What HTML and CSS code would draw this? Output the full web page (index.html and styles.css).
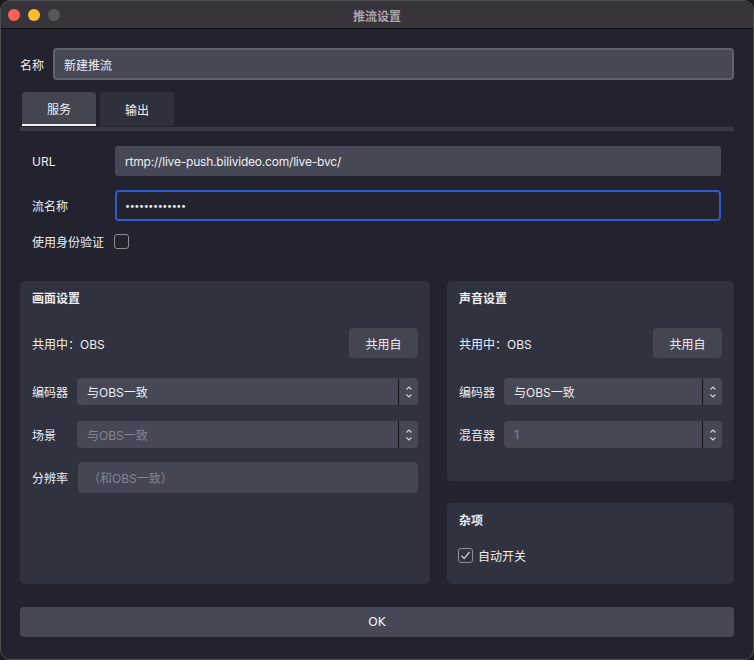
FILE: index.html
```html
<!DOCTYPE html>
<html lang="zh-CN">
<head>
    <meta charset="UTF-8">
    <meta name="viewport" content="width=device-width, initial-scale=1.0">
    <title>推流设置</title>
    <link rel="stylesheet" href="styles.css">
</head>
<body>
    <div class="window">
        <!-- Title bar -->
        <div class="titlebar">
            <div class="lights">
                <span class="light red"></span>
                <span class="light yellow"></span>
                <span class="light gray"></span>
            </div>
            <div class="title">推流设置</div>
            <div></div>
        </div>

        <div class="content">
            <div class="name-row">
                <span class="name-label">名称</span>
                <div class="name-input">新建推流</div>
            </div>

            <div class="tabs">
                <div class="tab active">服务</div>
                <div class="tab">输出</div>
            </div>
            <div class="tab-bar"></div>

            <!-- Service tab -->
            <div class="service">
                <div class="field-row">
                    <span class="field-label">URL</span>
                    <div class="text-input url">rtmp://live-push.bilivideo.com/live-bvc/</div>
                </div>
                <div class="field-row">
                    <span class="field-label">流名称</span>
                    <div class="text-input focused"><span class="dots">•••••••••••••</span></div>
                </div>
                <div class="check-row">
                    <span class="field-label auth-label">使用身份验证</span>
                    <span class="checkbox"></span>
                </div>
            </div>

            <div class="groups">
                <div class="group">
                    <div class="group-title">画面设置</div>
                    <div class="share-row">
                        <span>共用中：OBS</span>
                        <div class="btn">共用自</div>
                    </div>
                    <div class="combo-row first">
                        <span class="combo-label">编码器</span>
                        <div class="combo">
                            <span class="combo-text">与OBS一致</span>
                            <span class="spinner">
                                <svg width="8" height="14" viewBox="0 0 8 14"><polyline points="1.5,4.5 4,2 6.5,4.5" /><polyline points="1.5,9.5 4,12 6.5,9.5" /></svg>
                            </span>
                        </div>
                    </div>
                    <div class="combo-row">
                        <span class="combo-label">场景</span>
                        <div class="combo">
                            <span class="combo-text muted">与OBS一致</span>
                            <span class="spinner">
                                <svg width="8" height="14" viewBox="0 0 8 14"><polyline points="1.5,4.5 4,2 6.5,4.5" /><polyline points="1.5,9.5 4,12 6.5,9.5" /></svg>
                            </span>
                        </div>
                    </div>
                    <div class="combo-row last">
                        <span class="combo-label">分辨率</span>
                        <div class="plain-input">（和OBS一致）</div>
                    </div>
                </div>

                <div class="side">
                    <div class="group audio">
                        <div class="group-title">声音设置</div>
                        <div class="share-row">
                            <span>共用中：OBS</span>
                            <div class="btn">共用自</div>
                        </div>
                        <div class="combo-row first">
                            <span class="combo-label">编码器</span>
                            <div class="combo">
                                <span class="combo-text">与OBS一致</span>
                                <span class="spinner">
                                    <svg width="8" height="14" viewBox="0 0 8 14"><polyline points="1.5,4.5 4,2 6.5,4.5" /><polyline points="1.5,9.5 4,12 6.5,9.5" /></svg>
                                </span>
                            </div>
                        </div>
                        <div class="combo-row">
                            <span class="combo-label">混音器</span>
                            <div class="combo">
                                <span class="combo-text muted">1</span>
                                <span class="spinner">
                                    <svg width="8" height="14" viewBox="0 0 8 14"><polyline points="1.5,4.5 4,2 6.5,4.5" /><polyline points="1.5,9.5 4,12 6.5,9.5" /></svg>
                                </span>
                            </div>
                        </div>
                    </div>

                    <div class="group misc">
                        <div class="group-title">杂项</div>
                        <div class="auto-row">
                            <span class="checkbox checked">
                                <svg width="13" height="13" viewBox="0 0 13 13"><polyline points="2.5,6.8 5.2,9.5 10.5,3" /></svg>
                            </span>
                            <span>自动开关</span>
                        </div>
                    </div>
                </div>
            </div>

            <button class="ok-btn">OK</button>
        </div>
    </div>
</body>
</html>
```

FILE: styles.css
```css
* {
    margin: 0;
    padding: 0;
    box-sizing: border-box;
}

:root {
    --bg: #22232e;
    --group-bg: #30333f;
    --input-bg: #464955;
    --text: #eeeef2;
    --muted: #82858e;
    --focus: #2f5bd0;
}

html, body {
    background: #1c1c1f;
}

body {
    font-family: "Inter", "Noto Sans CJK SC", sans-serif;
    font-size: 12px;
    color: var(--text);
}

.window {
    width: 754px;
    height: 660px;
    background: var(--bg);
    border: 1px solid #4d4d53;
    border-radius: 10px;
    overflow: hidden;
    display: flex;
    flex-direction: column;
}

/* title bar */
.titlebar {
    height: 28px;
    background: #38343c;
    border-bottom: 1px solid #0c0c0e;
    display: grid;
    grid-template-columns: 1fr auto 1fr;
    align-items: center;
}

.lights {
    display: flex;
    gap: 8px;
    padding-left: 7px;
    padding-top: 1px;
}

.light {
    width: 12px;
    height: 12px;
    border-radius: 50%;
}

.light.red { background: #fe5f57; }
.light.yellow { background: #febc2e; }
.light.gray { background: #57565b; }

.title {
    font-size: 12px;
    font-weight: 700;
    color: #aaa7ad;
    padding-top: 1px;
}

.content {
    flex: 1;
    display: flex;
    flex-direction: column;
    padding: 19px 19px 0;
}

/* name */
.name-row {
    display: flex;
    align-items: center;
    height: 32px;
}

.name-label {
    width: 33px;
}

.name-input {
    flex: 1;
    height: 32px;
    background: var(--input-bg);
    border: 2px solid #60636d;
    border-radius: 4px;
    padding-left: 9px;
    display: flex;
    align-items: center;
}

/* tabs */
.tabs {
    display: flex;
    gap: 4px;
    margin-top: 12px;
    padding-left: 2px;
}

.tab {
    width: 74px;
    height: 34px;
    background: #2e313c;
    border-radius: 4px 4px 0 0;
    display: flex;
    align-items: center;
    justify-content: center;
}

.tab.active {
    background: #434651;
    border-bottom: 2px solid #f2f2f2;
    padding-top: 1px;
}

.tab-bar {
    height: 4px;
    margin-top: 1px;
    background: #363945;
}

/* service fields */
.service {
    padding: 15px 13px 0 12px;
    display: flex;
    flex-direction: column;
}

.field-row {
    display: flex;
    align-items: center;
    margin-bottom: 14px;
}

.field-label {
    width: 83px;
}

.text-input {
    flex: 1;
    height: 30px;
    background: var(--input-bg);
    border-radius: 3px;
    padding-left: 10px;
    display: flex;
    align-items: center;
}

.text-input.url {
    letter-spacing: -0.2px;
}

.text-input.focused {
    height: 31px;
    background: var(--bg);
    border: 2px solid var(--focus);
    border-radius: 4px;
    padding-left: 8px;
}

.dots {
    font-size: 9px;
    letter-spacing: -0.4px;
}

.check-row {
    display: flex;
    align-items: center;
    height: 15px;
    margin-top: -1px;
}

.auth-label {
    width: 82px;
}

.checkbox {
    width: 15px;
    height: 15px;
    border: 1.5px solid #8e8f95;
    border-radius: 3px;
    display: flex;
    align-items: center;
    justify-content: center;
}

.checkbox svg polyline {
    fill: none;
    stroke: #c9c9cd;
    stroke-width: 1.3;
}

/* groups */
.groups {
    display: flex;
    gap: 17px;
    margin-top: 32px;
}

.group {
    width: 410px;
    background: var(--group-bg);
    border-radius: 5px;
    padding: 9px 12px 0;
    display: flex;
    flex-direction: column;
}

.side {
    flex: 1;
    display: flex;
    flex-direction: column;
    gap: 22px;
}

.side .group {
    width: auto;
}

.group.audio {
    padding-bottom: 33px;
}

.group.misc {
    padding-bottom: 21px;
}

.group-title {
    font-weight: 700;
    line-height: 17px;
}

.share-row {
    display: flex;
    align-items: center;
    justify-content: space-between;
    margin-top: 21px;
}

.btn {
    width: 69px;
    height: 30px;
    background: #434651;
    border-radius: 4px;
    display: flex;
    align-items: center;
    justify-content: center;
}

.combo-row {
    display: flex;
    align-items: center;
    margin-top: 16px;
}

.combo-row.first {
    margin-top: 20px;
}

.combo-row.last {
    margin-top: 14px;
}

.combo-label {
    width: 45px;
}

.combo {
    flex: 1;
    height: 27px;
    background: var(--input-bg);
    border-radius: 4px;
    display: flex;
}

.combo-text {
    flex: 1;
    padding-left: 10px;
    display: flex;
    align-items: center;
    border-right: 1px solid #15161b;
}

.combo-text.muted,
.plain-input {
    color: var(--muted);
}

.spinner {
    width: 19px;
    display: flex;
    align-items: center;
    justify-content: center;
}

.spinner svg polyline {
    fill: none;
    stroke: #d2d2d6;
    stroke-width: 1.2;
}

.plain-input {
    flex: 1;
    height: 31px;
    margin-left: 1px;
    background: #444753;
    border-radius: 4px;
    padding-left: 10px;
    display: flex;
    align-items: center;
}

.auto-row {
    display: flex;
    align-items: center;
    gap: 5px;
    margin-top: 19px;
    height: 15px;
    margin-left: -1px;
}

/* ok */
.ok-btn {
    margin-top: 23px;
    height: 30px;
    background: var(--input-bg);
    border: none;
    border-radius: 4px;
    color: #f4f4f4;
    font-family: "DejaVu Sans", sans-serif;
    font-size: 12px;
    cursor: pointer;
}
```
